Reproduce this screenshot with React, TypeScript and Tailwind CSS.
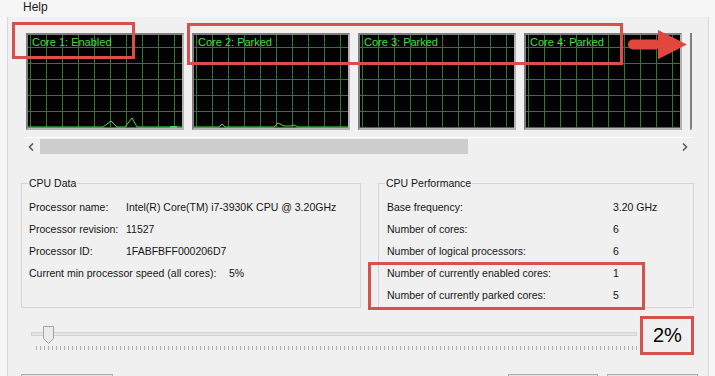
import React from "react";

type Core = {
  label: string;
  trace?: string;
  bar?: [number, number];
};

const cores: Core[] = [
  { label: "Core 1: Enabled", trace: "0,92 75,92 83,86 89,92 97,92 104,83 109,92 154,92", bar: [142, 149] },
  { label: "Core 2: Parked", trace: "0,92 25,92 28,89 31,92 80,92 84,88 90,91 97,91 100,90 104,92 154,92" },
  { label: "Core 3: Parked" },
  { label: "Core 4: Parked" },
  { label: "" },
];

const dataRows = [
  ["Processor name:", "Intel(R) Core(TM) i7-3930K CPU @ 3.20GHz"],
  ["Processor revision:", "11527"],
  ["Processor ID:", "1FABFBFF000206D7"],
];

const perfRows = [
  ["Base frequency:", "3.20 GHz"],
  ["Number of cores:", "6"],
  ["Number of logical processors:", "6"],
  ["Number of currently enabled cores:", "1"],
  ["Number of currently parked cores:", "5"],
];

function CoreGraph({ core }: { core: Core }) {
  const cols = Array.from({ length: 10 }, (_, i) => 2 + i * 16);
  const rows = Array.from({ length: 6 }, (_, i) => 12 + i * 16);
  return (
    <div className="relative w-[158px] h-[97px] shrink-0 bg-black border-2 border-t-[#7f7f7f] border-l-[#7f7f7f] border-r-[#b4b4b4] border-b-[#b4b4b4]">
      <svg width="154" height="93" className="block" shapeRendering="crispEdges">
        {cols.map((x) => (
          <line key={"c" + x} x1={x + 0.5} y1="0" x2={x + 0.5} y2="93" stroke="#307a30" strokeWidth="1" />
        ))}
        {rows.map((y) => (
          <line key={"r" + y} x1="0" y1={y + 0.5} x2="154" y2={y + 0.5} stroke="#307a30" strokeWidth="1" />
        ))}
        {core.trace && (
          <polyline points={core.trace} fill="none" stroke="#3fe03f" strokeWidth="1" shapeRendering="auto" />
        )}
        {core.bar && (
          <rect x={core.bar[0]} y="90.5" width={core.bar[1] - core.bar[0]} height="2" fill="#3fe03f" />
        )}
      </svg>
      {core.label && (
        <span className="absolute left-[4px] top-[2px] text-[11px] leading-[11px] text-[#3ee23e] whitespace-nowrap">
          {core.label}
        </span>
      )}
    </div>
  );
}

function Chevron({ dir }: { dir: "left" | "right" }) {
  return (
    <svg width="6" height="8" viewBox="0 0 6 8" className="block">
      <polyline
        points={dir === "left" ? "5,0.5 1.5,4 5,7.5" : "1,0.5 4.5,4 1,7.5"}
        fill="none"
        stroke="#5a5a5a"
        strokeWidth="1.6"
      />
    </svg>
  );
}

function GroupBox({ title, width, children }: { title: string; width: string; children: React.ReactNode }) {
  return (
    <fieldset className={`${width} h-[131px] shrink-0 border border-[#d5d5d5] m-0 p-0`}>
      <legend className="ml-[6px] px-[1px] leading-[12px] text-[10.5px]">{title}</legend>
      <div className="pt-[7px]">{children}</div>
    </fieldset>
  );
}

export default function App() {
  return (
    <div className="relative w-[715px] h-[376px] overflow-hidden bg-[#f6f6f6] flex flex-col font-['Liberation_Sans',Arial,sans-serif] text-[10.5px] text-[#151515]">
      {/* menu bar */}
      <div className="h-[17px] shrink-0 pl-[23px]">
        <span className="block text-[12px] leading-[14px] text-[#1a1a1a]">Help</span>
      </div>

      <div className="flex flex-1 min-h-0">
        <div className="w-[7px] shrink-0" />
        <div className="w-[702px] shrink-0 overflow-hidden border-x border-[#d8d8d8] bg-[#f0f0f0] pt-[16px] flex flex-col">
          {/* core graphs */}
          <div className="shrink-0 ml-[18px] w-[666px] h-[97px] overflow-hidden flex gap-2">
            {cores.map((c, i) => (
              <CoreGraph key={i} core={c} />
            ))}
          </div>

          {/* horizontal scrollbar */}
          <div className="shrink-0 mt-[7px] ml-[18px] w-[666px] h-[18px] border-t border-white flex items-center">
            <div className="w-[14px] pl-[2px]">
              <Chevron dir="left" />
            </div>
            <div className="w-[428px] h-[15px] bg-[#cdcdcd]" />
            <div className="flex-1" />
            <div className="mr-[4px]">
              <Chevron dir="right" />
            </div>
          </div>

          {/* group boxes */}
          <div className="shrink-0 mt-[22px] ml-[13px] flex gap-[17px]">
            <GroupBox title="CPU Data" width="w-[340px]">
              <div className="pl-[7px]">
                {dataRows.map(([k, v]) => (
                  <div key={k} className="flex h-[22px] leading-[22px] whitespace-nowrap">
                    <span className="w-[97px] shrink-0">{k}</span>
                    <span>{v}</span>
                  </div>
                ))}
                <div className="flex h-[22px] leading-[22px] whitespace-nowrap">
                  <span className="w-[200px] shrink-0">Current min processor speed (all cores):</span>
                  <span>5%</span>
                </div>
              </div>
            </GroupBox>
            <GroupBox title="CPU Performance" width="w-[316px]">
              <div className="pl-[8px]">
                {perfRows.map(([k, v]) => (
                  <div key={k} className="flex h-[22px] leading-[22px] whitespace-nowrap">
                    <span className="w-[226px] shrink-0">{k}</span>
                    <span>{v}</span>
                  </div>
                ))}
              </div>
            </GroupBox>
          </div>

          {/* slider */}
          <div className="shrink-0 mt-[16px] ml-[23px] flex items-start h-[28px]">
            <div className="relative w-[610px] h-[28px]">
              <div className="mt-[8px] w-[606px] h-[4px] border border-[#d3d3d3] bg-[#e6e6e6]" />
              <div className="mt-[10px] ml-[5px] w-[601px] h-[4px] bg-[repeating-linear-gradient(90deg,#b0b0b0_0px,#b0b0b0_1px,transparent_1px,transparent_4px)]" />
              <svg width="11" height="18" viewBox="0 0 11 18" className="absolute left-[12px] top-[2px]">
                <path d="M0.5,0.5 H10.5 V12.5 L5.5,17.5 L0.5,12.5 Z" fill="#ebebeb" stroke="#a3a3a3" />
              </svg>
            </div>
            <span className="ml-[12px] mt-[1px] text-[20px] leading-[20px] text-black">2%</span>
          </div>

          {/* buttons */}
          <div className="shrink-0 mt-[22px] ml-[13px] mr-[10px] flex">
            <div className="w-[92px] h-[23px] border border-[#adadad] bg-[#e1e1e1]" />
            <div className="flex-1" />
            <div className="w-[90px] h-[23px] border border-[#adadad] bg-[#e1e1e1]" />
            <div className="ml-[9px] w-[91px] h-[23px] border border-[#adadad] bg-[#e1e1e1]" />
          </div>
        </div>
        <div className="flex-1" />
      </div>

      {/* red annotations */}
      <div className="absolute left-[12px] top-[22px] w-[123px] h-[37px] border-[3px] border-[#d8504b]" />
      <div className="absolute left-[187px] top-[23px] w-[436px] h-[42px] border-[3px] border-[#d8504b]" />
      <div className="absolute left-[368px] top-[262px] w-[277px] h-[48px] border-[3px] border-[#d8504b]" />
      <div className="absolute left-[640px] top-[316px] w-[54px] h-[39px] border-[3px] border-[#d8504b]" />
      <svg width="64" height="34" viewBox="0 0 64 34" className="absolute left-[626px] top-[28px]">
        <rect x="2" y="11.5" width="32" height="10" rx="5" fill="#e2473e" />
        <polygon points="32,2 61,16.5 32,31.3" fill="#e2473e" />
      </svg>
    </div>
  );
}
